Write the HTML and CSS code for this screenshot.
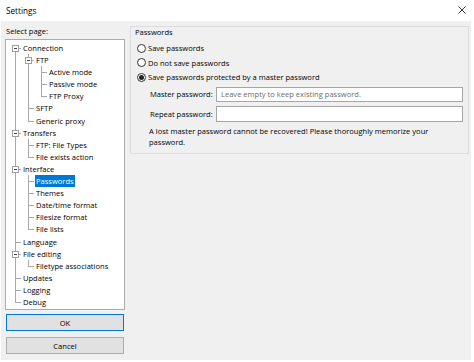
FILE: index.html
```html
<!DOCTYPE html>
<html lang="en">
<head>
    <meta charset="UTF-8">
    <title>Settings</title>
    <link rel="stylesheet" href="styles.css">
</head>
<body>
    <div class="window">
        <div class="titlebar">
            <span>Settings</span>
            <svg class="close" width="8" height="8" viewBox="0 0 8 8">
                <path d="M0.5 0.5L7.5 7.5M7.5 0.5L0.5 7.5" stroke="#222" stroke-width="0.9" fill="none"/>
            </svg>
        </div>

        <div class="dialog">
            <div class="sidebar">
                <div class="caption">Select page:</div>
                <div class="tree">
                    <ul>
                        <li>
                            <div class="row"><span class="toggle"></span><span>Connection</span></div>
                            <ul>
                                <li>
                                    <div class="row"><span class="toggle"></span><span>FTP</span></div>
                                    <ul>
                                        <li><div class="row"><span>Active mode</span></div></li>
                                        <li><div class="row"><span>Passive mode</span></div></li>
                                        <li><div class="row"><span>FTP Proxy</span></div></li>
                                    </ul>
                                </li>
                                <li><div class="row"><span>SFTP</span></div></li>
                                <li><div class="row"><span>Generic proxy</span></div></li>
                            </ul>
                        </li>
                        <li>
                            <div class="row"><span class="toggle"></span><span>Transfers</span></div>
                            <ul>
                                <li><div class="row"><span>FTP: File Types</span></div></li>
                                <li><div class="row"><span>File exists action</span></div></li>
                            </ul>
                        </li>
                        <li>
                            <div class="row"><span class="toggle"></span><span>Interface</span></div>
                            <ul>
                                <li><div class="row"><span class="selected">Passwords</span></div></li>
                                <li><div class="row"><span>Themes</span></div></li>
                                <li><div class="row"><span>Date/time format</span></div></li>
                                <li><div class="row"><span>Filesize format</span></div></li>
                                <li><div class="row"><span>File lists</span></div></li>
                            </ul>
                        </li>
                        <li><div class="row"><span>Language</span></div></li>
                        <li>
                            <div class="row"><span class="toggle"></span><span>File editing</span></div>
                            <ul>
                                <li><div class="row"><span>Filetype associations</span></div></li>
                            </ul>
                        </li>
                        <li><div class="row"><span>Updates</span></div></li>
                        <li><div class="row"><span>Logging</span></div></li>
                        <li><div class="row"><span>Debug</span></div></li>
                    </ul>
                </div>
                <button class="btn btn-default">OK</button>
                <button class="btn">Cancel</button>
            </div>

            <div class="group">
                <div class="group-title">Passwords</div>
                <label class="radio"><span class="dot"></span>Save passwords</label>
                <label class="radio"><span class="dot"></span>Do not save passwords</label>
                <label class="radio"><span class="dot checked"></span>Save passwords protected by a master password</label>
                <div class="fields">
                    <span class="field-label">Master password:</span>
                    <div class="input placeholder">Leave empty to keep existing password.</div>
                    <span class="field-label">Repeat password:</span>
                    <div class="input"></div>
                </div>
                <p class="note">A lost master password cannot be recovered! Please thoroughly memorize your<br>password.</p>
            </div>
        </div>
    </div>
</body>
</html>
```

FILE: styles.css
```css
* {
    margin: 0;
    padding: 0;
    box-sizing: border-box;
}

body {
    font-family: 'Open Sans', 'Noto Sans', sans-serif;
    font-size: 7.55px;
    color: #000;
    background: #fff;
}

.window {
    width: 474px;
    height: 362px;
}

.titlebar {
    height: 21px;
    display: flex;
    align-items: center;
    justify-content: space-between;
    padding: 0 8px 1px 6px;
    font-size: 8.2px;
}

.dialog {
    height: 339px;
    margin: 0 3px 0 1px;
    background: #f0f0f0;
    display: flex;
    gap: 5px;
    padding: 4px 0 0 4px;
}

/* left column */
.sidebar {
    width: 120px;
    display: flex;
    flex-direction: column;
}

.caption {
    line-height: 12px;
    margin-bottom: 2px;
    padding-left: 1px;
}

.tree {
    height: 271px;
    background: #fff;
    border: 1px solid #adadad;
    padding: 2px 0 0 3px;
    overflow: hidden;
}

.tree ul {
    list-style: none;
}

.tree ul ul {
    padding-left: 13px;
}

.tree li {
    position: relative;
}

.tree li::before {
    content: '';
    position: absolute;
    left: 6px;
    top: 0;
    bottom: 0;
    border-left: 1px solid #a8a8a8;
}

.tree li:last-child::before {
    bottom: auto;
    height: 6px;
}

.tree > ul > li:first-child::before {
    top: 6px;
}

.row {
    position: relative;
    height: 12.1px;
    line-height: 12.1px;
    padding-left: 14px;
    white-space: nowrap;
}

.row::before {
    content: '';
    position: absolute;
    left: 6px;
    top: 6px;
    width: 6px;
    border-top: 1px solid #a8a8a8;
}

.toggle {
    position: absolute;
    left: 3px;
    top: 3px;
    width: 7px;
    height: 7px;
    border: 1px solid #a0a0a0;
    background: #fff;
    z-index: 1;
}

.toggle::after {
    content: '';
    position: absolute;
    left: 1px;
    top: 2px;
    width: 3px;
    height: 1px;
    background: #444;
}

.selected {
    display: inline-block;
    height: 12px;
    line-height: 12px;
    background: #0078d7;
    color: #fff;
    padding: 0 1px;
    margin-left: -1px;
}

.btn {
    height: 17px;
    font: inherit;
    background: #e1e1e1;
    border: 1px solid #adadad;
    color: #000;
    margin-top: 6px;
    margin-left: 1px;
    width: 118px;
}

.btn-default {
    margin-top: 4px;
    border-color: #0078d7;
}

/* right panel */
.group {
    width: 339px;
    height: 128px;
    margin-top: 1px;
    border: 1px solid #dcdcdc;
    padding: 0 5px 0 6px;
}

.group-title {
    line-height: 9px;
    margin: 1px 0 0 -2px;
}

.radio {
    display: flex;
    align-items: center;
    gap: 2px;
    height: 14.5px;
    white-space: nowrap;
}

.radio:first-of-type {
    margin-top: 4px;
}

.dot {
    width: 9px;
    height: 9px;
    border: 1px solid #333;
    border-radius: 50%;
    background: #fff;
    display: flex;
    align-items: center;
    justify-content: center;
}

.dot.checked::after {
    content: '';
    width: 5px;
    height: 5px;
    border-radius: 50%;
    background: #222;
}

.fields {
    display: grid;
    grid-template-columns: 61px 1fr;
    column-gap: 5px;
    row-gap: 4px;
    align-items: center;
    margin: 2px 0 0 13px;
}

.field-label {
    white-space: nowrap;
}

.input {
    height: 15px;
    background: #fff;
    border: 1px solid #a5a5a5;
    padding-left: 4px;
    line-height: 13px;
    white-space: nowrap;
    overflow: hidden;
}

.input + span + .input {
    height: 16px;
}

.placeholder {
    color: #6d6d6d;
}

.note {
    margin: 4px 0 0 12px;
    line-height: 11px;
    white-space: nowrap;
}
```
